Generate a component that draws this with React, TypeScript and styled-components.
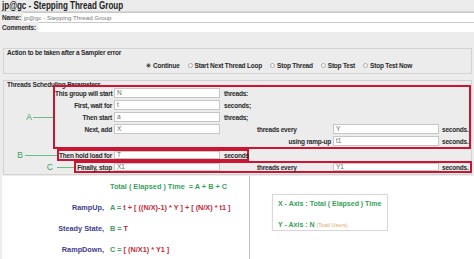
import styled, { createGlobalStyle, css } from "styled-components";

const RED = "#cc1533";
const GREEN = "#36a25a";
const NAVY = "#3d3d8e";
const FORMULA_RED = "#c42a3a";

const GlobalStyle = createGlobalStyle`
  html, body {
    margin: 0;
    padding: 0;
    background: #ececec;
  }
  #root {
    width: 474px;
    height: 259px;
    overflow: hidden;
  }
`;

const formText = css`
  font-size: 6.5px;
  font-weight: bold;
  letter-spacing: -0.2px;
  color: #2a2a2a;
  white-space: nowrap;
`;

const Page = styled.div`
  width: 474px;
  height: 259px;
  display: flex;
  flex-direction: column;
  background: #ececec;
  font-family: "Liberation Sans", Arial, sans-serif;
`;

const TitleBar = styled.div`
  height: 14px;
  padding-left: 2px;
  display: flex;
  align-items: center;
  border-bottom: 1px solid #d6d6d6;
`;

const Title = styled.h1`
  margin: 0;
  font-size: 11px;
  line-height: 1;
  font-weight: bold;
  color: #1c1c1c;
  white-space: nowrap;
  transform: scaleX(0.73);
  transform-origin: left center;
`;

const FieldRow = styled.div`
  height: 10px;
  padding-left: 2px;
  display: flex;
  align-items: center;
`;

const FieldLabel = styled.span`
  ${formText}
  margin-right: 2px;
`;

const TextField = styled.div`
  flex: 1;
  height: 10px;
  box-sizing: border-box;
  background: #fff;
  border-top: 1px solid #c9c9c9;
  padding-left: 1px;
  font-size: 6.2px;
  line-height: 9px;
  color: #777;
  white-space: nowrap;
`;

const Panel = styled.div<{ $top: number; $bottom?: number }>`
  margin: ${(p) => p.$top}px 2px 0 3px;
  padding-bottom: ${(p) => p.$bottom ?? 0}px;
  border: 1px solid #d3d3d3;
  display: flex;
  flex-direction: column;
`;

const PanelTitle = styled.div<{ $pull?: number }>`
  ${formText}
  padding-left: 3px;
  line-height: 7px;
  height: 7px;
  margin-bottom: ${(p) => -(p.$pull ?? 0)}px;
`;

const RadioRow = styled.div`
  display: flex;
  align-items: center;
  height: 8px;
  margin: 5px 0 4px;
  padding-left: 142px;
  gap: 8px;
`;

const RadioOption = styled.label`
  ${formText}
  display: flex;
  align-items: center;
  gap: 2px;
`;

const RadioDot = styled.span<{ $on?: boolean }>`
  width: 5px;
  height: 5px;
  box-sizing: border-box;
  border-radius: 50%;
  border: 1px solid #a9a9a9;
  background: ${(p) =>
    p.$on ? "radial-gradient(circle, #444 0 1.3px, #fff 1.6px)" : "#fff"};
`;

const Group = styled.div`
  display: flex;
  align-items: center;
`;

const Annotation = styled.div<{ $w: number; $gap: number }>`
  width: ${(p) => p.$w}px;
  flex-shrink: 0;
  display: flex;
  justify-content: flex-end;
  align-items: center;
  gap: ${(p) => p.$gap}px;
`;

const Letter = styled.span`
  font-size: 8.5px;
  color: ${GREEN};
  line-height: 8px;
`;

const Leader = styled.span<{ $w: number }>`
  width: ${(p) => p.$w}px;
  height: 1px;
  background: #6cbc85;
`;

const Box = styled.div<{ $w: number }>`
  width: ${(p) => p.$w}px;
  flex-shrink: 0;
  box-sizing: border-box;
  border: 2px solid ${RED};
  display: flex;
  flex-direction: column;
`;

const Row = styled.div<{ $h: number }>`
  height: ${(p) => p.$h}px;
  display: flex;
  align-items: center;
`;

const Label = styled.span<{ $w: number }>`
  ${formText}
  width: ${(p) => p.$w}px;
  flex-shrink: 0;
  text-align: right;
`;

const Input = styled.div<{ $h: number }>`
  margin-left: 2px;
  width: 106px;
  height: ${(p) => p.$h}px;
  flex-shrink: 0;
  box-sizing: border-box;
  background: #fff;
  border: 1px solid #c6c6c6;
  padding-left: 2px;
  font-size: 6.5px;
  line-height: ${(p) => p.$h - 2}px;
  color: #6a6a6a;
`;

const Unit = styled.span`
  ${formText}
  margin-left: 4px;
  width: 33px;
  flex-shrink: 0;
`;

const Mid = styled.span<{ $right?: boolean }>`
  ${formText}
  width: 74px;
  flex-shrink: 0;
  text-align: ${(p) => (p.$right ? "right" : "left")};
`;

const Seconds = styled.span`
  ${formText}
  margin-left: 3px;
`;

const Spacer = styled.span<{ $w: number }>`
  width: ${(p) => p.$w}px;
  flex-shrink: 0;
`;

const Bottom = styled.div`
  flex: 1;
  margin: 1px 0 2px 2px;
  background: #fff;
  display: flex;
`;

const FormulaPane = styled.div`
  width: 247px;
  border-right: 1px solid #c4c4c4;
  display: grid;
  grid-template-columns: 102px 1fr;
  grid-auto-rows: 20px;
  row-gap: 1px;
  column-gap: 6px;
  align-items: center;
  font-size: 7.3px;
  font-weight: bold;
  white-space: nowrap;
`;

const FormulaLabel = styled.span`
  text-align: right;
  color: ${NAVY};
`;

const Part = styled.span<{ $c: string }>`
  color: ${(p) => p.$c};
`;

const LegendPane = styled.div`
  flex: 1;
  padding: 18px 0 0 22px;
`;

const LegendBox = styled.div`
  width: 116px;
  height: 37px;
  box-sizing: border-box;
  border: 1px solid #d8d8d8;
  box-shadow: 0 0 1px rgba(0, 0, 0, 0.08);
  padding: 4px 0 0 5px;
  display: flex;
  flex-direction: column;
  gap: 11px;
`;

const LegendLine = styled.div`
  font-size: 7px;
  line-height: 10px;
  font-weight: bold;
  color: ${GREEN};
  white-space: nowrap;
`;

const Note = styled.span`
  font-size: 5.5px;
  font-weight: normal;
  color: #e9a46a;
`;

const ACTIONS = [
  "Continue",
  "Start Next Thread Loop",
  "Stop Thread",
  "Stop Test",
  "Stop Test Now",
];

const App = () => {
  return (
    <>
      <GlobalStyle />
      <Page>
        <TitleBar>
          <Title>jp@gc - Stepping Thread Group</Title>
        </TitleBar>
        <FieldRow>
          <FieldLabel>Name:</FieldLabel>
          <TextField>jp@gc - Stepping Thread Group</TextField>
        </FieldRow>
        <FieldRow>
          <FieldLabel>Comments:</FieldLabel>
          <TextField />
        </FieldRow>

        <Panel $top={16}>
          <PanelTitle>Action to be taken after a Sampler error</PanelTitle>
          <RadioRow>
            {ACTIONS.map((a, i) => (
              <RadioOption key={a}>
                <RadioDot $on={i === 0} />
                {a}
              </RadioOption>
            ))}
          </RadioRow>
        </Panel>

        <Panel $top={6} $bottom={1}>
          <PanelTitle $pull={3}>Threads Scheduling Parameters</PanelTitle>

          <Group>
            <Annotation $w={49} $gap={1}>
              <Letter>A</Letter>
              <Leader $w={20} />
            </Annotation>
            <Box $w={418}>
              <Row $h={12}>
                <Label $w={57}>This group will start</Label>
                <Input $h={10}>N</Input>
                <Unit>threads:</Unit>
              </Row>
              <Row $h={12}>
                <Label $w={57}>First, wait for</Label>
                <Input $h={10}>t</Input>
                <Unit>seconds;</Unit>
              </Row>
              <Row $h={12}>
                <Label $w={57}>Then start</Label>
                <Input $h={10}>a</Input>
                <Unit>threads;</Unit>
              </Row>
              <Row $h={12}>
                <Label $w={57}>Next, add</Label>
                <Input $h={10}>X</Input>
                <Unit />
                <Mid>threads every</Mid>
                <Input $h={10}>Y</Input>
                <Seconds>seconds.</Seconds>
              </Row>
              <Row $h={12}>
                <Spacer $w={202} />
                <Mid $right>using ramp-up</Mid>
                <Input $h={10}>t1</Input>
                <Seconds>seconds.</Seconds>
              </Row>
            </Box>
          </Group>

          <Group>
            <Annotation $w={53} $gap={2}>
              <Letter>B</Letter>
              <Leader $w={32} />
            </Annotation>
            <Box $w={192}>
              <Row $h={8}>
                <Label $w={53}>Then hold load for</Label>
                <Input $h={8}>T</Input>
                <Unit>seconds</Unit>
              </Row>
            </Box>
          </Group>

          <Group>
            <Annotation $w={70} $gap={4}>
              <Letter>C</Letter>
              <Leader $w={17} />
            </Annotation>
            <Box $w={398}>
              <Row $h={8}>
                <Label $w={36}>Finally, stop</Label>
                <Input $h={8}>X1</Input>
                <Unit />
                <Mid>threads every</Mid>
                <Input $h={8}>Y1</Input>
                <Seconds>seconds.</Seconds>
              </Row>
            </Box>
          </Group>
        </Panel>

        <Bottom>
          <FormulaPane>
            <span />
            <Part $c={GREEN}>Total ( Elapsed ) Time&nbsp;&nbsp;= A + B + C</Part>
            <FormulaLabel>RampUp,</FormulaLabel>
            <span>
              <Part $c={GREEN}>A = </Part>
              <Part $c={FORMULA_RED}>t + [ ((N/X)-1) * Y ] + [ (N/X) * t1 ]</Part>
            </span>
            <FormulaLabel>Steady State,</FormulaLabel>
            <span>
              <Part $c={GREEN}>B = </Part>
              <Part $c={FORMULA_RED}>T</Part>
            </span>
            <FormulaLabel>RampDown,</FormulaLabel>
            <span>
              <Part $c={GREEN}>C = </Part>
              <Part $c={FORMULA_RED}>[ (N/X1) * Y1 ]</Part>
            </span>
          </FormulaPane>
          <LegendPane>
            <LegendBox>
              <LegendLine>X - Axis : Total ( Elapsed ) Time</LegendLine>
              <LegendLine>
                Y - Axis : N <Note>(Toatl Users)</Note>
              </LegendLine>
            </LegendBox>
          </LegendPane>
        </Bottom>
      </Page>
    </>
  );
};

export default App;
